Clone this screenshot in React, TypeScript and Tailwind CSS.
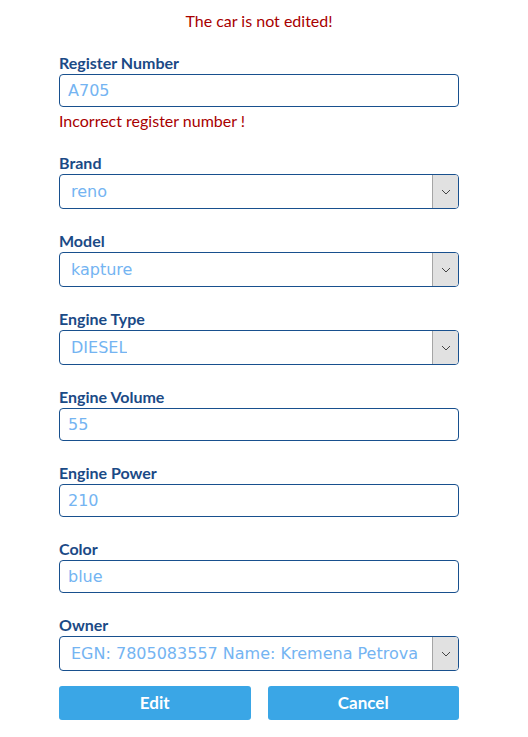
import React from "react"

const labelCls =
  "block h-[22px] text-[16px] leading-[21px] font-bold text-[#1b4a86] font-['Lato','Liberation_Sans',sans-serif]"
const valueCls =
  "text-[16px] text-[#74b4f2] font-['DejaVu_Sans',Verdana,sans-serif] truncate"
const latoCls = "font-['Lato','Liberation_Sans',sans-serif]"

function TextField({ label, value }: { label: string; value: string }) {
  return (
    <div>
      <label className={labelCls}>{label}</label>
      <div className="flex h-[33px] items-center rounded-[4px] border border-[#18508e] bg-white pl-[8px]">
        <span className={valueCls}>{value}</span>
      </div>
    </div>
  )
}

function SelectField({ label, value }: { label: string; value: string }) {
  return (
    <div>
      <label className={labelCls}>{label}</label>
      <div className="flex h-[35px] items-stretch overflow-hidden rounded-[4px] border border-[#18508e] bg-white">
        <div className="flex flex-1 items-center pl-[11px]">
          <span className={valueCls}>{value}</span>
        </div>
        <div className="flex w-[26px] items-center justify-center border-l border-[#a5a5a5] bg-[#e1e1e1]">
          <svg width="10" height="6" viewBox="0 0 10 6" fill="none">
            <path d="M1 1l4 4 4-4" stroke="#444" strokeWidth="1" />
          </svg>
        </div>
      </div>
    </div>
  )
}

export default function App() {
  return (
    <div className="min-h-[737px] w-[528px] bg-white">
      <div className="ml-[59px] w-[400px] pt-[11px]">
        {/* status message */}
        <p className={`h-[20px] text-center text-[16px] leading-[20px] text-[#a80000] ${latoCls}`}>
          The car is not edited!
        </p>

        <div className="mt-[21px]">
          <TextField label="Register Number" value="A705" />
          <p className={`mt-[4px] h-[20px] text-[16px] leading-[20px] text-[#a80000] ${latoCls}`}>
            Incorrect register number !
          </p>
        </div>

        <div className="mt-[21px] flex flex-col gap-[21px]">
          <SelectField label="Brand" value="reno" />
          <SelectField label="Model" value="kapture" />
          <SelectField label="Engine Type" value="DIESEL" />
          <TextField label="Engine Volume" value="55" />
          <TextField label="Engine Power" value="210" />
          <TextField label="Color" value="blue" />
          <SelectField label="Owner" value="EGN: 7805083557 Name: Kremena Petrova" />
        </div>

        <div className="mt-[15px] flex gap-[17px]">
          <button className={`h-[34px] flex-1 rounded-[3px] bg-[#3aa6e6] text-[17px] font-bold text-white ${latoCls}`}>
            Edit
          </button>
          <button className={`h-[34px] flex-1 rounded-[3px] bg-[#3aa6e6] text-[17px] font-bold text-white ${latoCls}`}>
            Cancel
          </button>
        </div>
      </div>
    </div>
  )
}
